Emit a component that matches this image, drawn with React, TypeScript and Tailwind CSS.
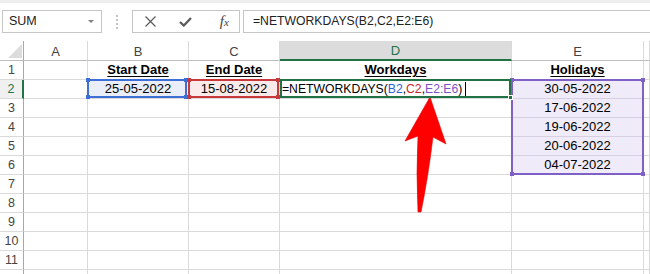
import React from "react";

const GRID = "border-r border-b border-[#dadada]";
const cellFont = { fontFamily: '"Liberation Sans", Arial, sans-serif' };
const uiFont = { fontFamily: '"Liberation Sans", Arial, sans-serif' };

function RowHead({ n, active }: { n: number; active?: boolean }) {
  return (
    <div
      className={
        "flex items-center justify-center border-b border-[#dadada] text-[12.5px] " +
        (active
          ? "border-r-2 border-r-[#217346] text-[#217346] bg-[#f0f0f0]"
          : "border-r border-r-[#a8a8a8] text-[#444]")
      }
      style={uiFont}
    >
      {n < 12 ? n : ""}
    </div>
  );
}

function Handle({ pos, color }: { pos: string; color: string }) {
  return <span className={"absolute w-[4px] h-[4px] " + pos + " " + color} />;
}

function Header({ text }: { text: string }) {
  return (
    <div className={GRID + " flex items-end justify-center pb-[2px]"}>
      <span className="text-[13px] leading-[15px] font-bold underline underline-offset-2 text-black">
        {text}
      </span>
    </div>
  );
}

export default function App() {
  const rows = Array.from({ length: 12 }, (_, i) => i + 1);
  return (
    <div className="w-[650px] h-[274px] overflow-hidden bg-white relative" style={cellFont}>
      <div className="h-[3px] bg-[#eeeeee]" />
      {/* formula bar */}
      <div className="flex h-[23px] mt-[7px]" style={uiFont}>
        <div className="ml-[2px] w-[100px] border border-[#c6c6c6] bg-white flex items-center justify-between pl-[6px] pr-[7px]">
          <span className="text-[12.5px] text-[#222]">SUM</span>
          <span className="w-0 h-0 border-l-[3px] border-r-[3px] border-t-[3px] border-l-transparent border-r-transparent border-t-[#808080]" />
        </div>
        <div className="w-[30px] flex flex-col items-center justify-center gap-[2px]">
          <span className="w-[2px] h-[2px] bg-[#c4c4c4]" />
          <span className="w-[2px] h-[2px] bg-[#c4c4c4]" />
          <span className="w-[2px] h-[2px] bg-[#c4c4c4]" />
          <span className="w-[2px] h-[2px] bg-[#c4c4c4]" />
        </div>
        <div className="w-[108px] border border-[#c6c6c6] bg-white flex items-center">
          <div className="w-[36px] flex justify-center">
            <svg width="11" height="11" viewBox="0 0 11 11">
              <path d="M0.5 0.5 L10.5 10.5 M10.5 0.5 L0.5 10.5" stroke="#5a5a5a" strokeWidth="1.2" fill="none" />
            </svg>
          </div>
          <div className="w-[36px] flex justify-center">
            <svg width="13" height="10" viewBox="0 0 13 10">
              <path d="M1 5 L4.8 8.6 L12 1" stroke="#5a5a5a" strokeWidth="2.2" fill="none" />
            </svg>
          </div>
          <div className="w-[36px] flex justify-center items-center pl-[6px]">
            <span className="italic text-[15px] text-[#444]" style={{ fontFamily: '"Liberation Serif", "Times New Roman", serif' }}>
              f
              <span className="text-[11px]">x</span>
            </span>
          </div>
        </div>
        <div className="ml-[3px] flex-1 border border-r-0 border-[#c6c6c6] bg-white flex items-center pl-[9px]">
          <span className="text-[12.2px] text-[#222]">=NETWORKDAYS(B2,C2,E2:E6)</span>
        </div>
      </div>
      <div className="h-[8px]" />
      {/* sheet */}
      <div
        className="grid grid-cols-[24px_64px_101px_91px_232px_132px_1fr] grid-rows-[20px_repeat(12,19px)]"
        style={uiFont}
      >
        {/* header row */}
        <div className="border-r border-r-[#a8a8a8] border-b border-b-[#bdbdbd] relative">
          <svg className="absolute left-[8px] top-[3px]" width="14" height="14" viewBox="0 0 14 14">
            <path d="M14 0 L14 14 L0 14 Z" fill="#dcdcdc" />
          </svg>
        </div>
        {["A", "B", "C", "D", "E", ""].map((c) => (
          <div
            key={c || "F"}
            className={
              "flex items-center justify-center text-[13px] pt-[2px] border-r border-[#dadada] " +
              (c === "D"
                ? "bg-[#dcdcdc] border-b-2 border-b-[#217346] text-[#217346]"
                : "border-b border-b-[#bdbdbd] text-[#444]")
            }
          >
            {c}
          </div>
        ))}

        {/* purple range E2:E6 */}
        <div className="col-start-6 row-start-3 row-span-5 relative flex flex-col bg-[#efebf8]">
          {["30-05-2022", "17-06-2022", "19-06-2022", "20-06-2022", "04-07-2022"].map((d) => (
            <div
              key={d}
              className="h-[19px] border-r border-b border-[#d6d0e2] flex items-center justify-center text-[13px] text-black"
              style={cellFont}
            >
              {d}
            </div>
          ))}
          <div className="absolute -left-[1px] -top-[1px] right-0 bottom-0 border-2 border-[#7e60c6] z-10">
            <Handle pos="-left-[3px] -top-[3px]" color="bg-[#7e60c6]" />
            <Handle pos="-right-[3px] -top-[3px]" color="bg-[#7e60c6]" />
            <Handle pos="-left-[3px] -bottom-[3px]" color="bg-[#7e60c6]" />
            <Handle pos="-right-[3px] -bottom-[3px]" color="bg-[#7e60c6]" />
          </div>
        </div>

        {rows.map((r) => (
          <React.Fragment key={r}>
            <RowHead n={r} active={r === 2} />
            <div className={GRID} />
            {r === 1 ? (
              <>
                <Header text="Start Date" />
                <Header text="End Date" />
                <Header text="Workdays" />
                <Header text="Holidays" />
              </>
            ) : r === 2 ? (
              <>
                <div className={GRID + " relative bg-[#e9eef9] flex items-center justify-center text-[13px] text-black"} style={cellFont}>
                  25-05-2022
                  <div className="absolute -left-[1px] -top-[1px] right-[1px] bottom-0 border-2 border-[#3d6fd6] z-10">
                    <Handle pos="-left-[3px] -top-[3px]" color="bg-[#3d6fd6]" />
                    <Handle pos="-right-[3px] -top-[3px]" color="bg-[#3d6fd6]" />
                    <Handle pos="-left-[3px] -bottom-[3px]" color="bg-[#3d6fd6]" />
                    <Handle pos="-right-[3px] -bottom-[3px]" color="bg-[#3d6fd6]" />
                  </div>
                </div>
                <div className={GRID + " relative bg-[#fbeaea] flex items-center justify-center text-[13px] text-black"} style={cellFont}>
                  15-08-2022
                  <div className="absolute -left-[1px] -top-[1px] right-0 bottom-0 border-2 border-[#c8383c] z-10">
                    <Handle pos="-left-[3px] -top-[3px]" color="bg-[#c8383c]" />
                    <Handle pos="-right-[3px] -top-[3px]" color="bg-[#c8383c]" />
                    <Handle pos="-left-[3px] -bottom-[3px]" color="bg-[#c8383c]" />
                    <Handle pos="-right-[3px] -bottom-[3px]" color="bg-[#c8383c]" />
                  </div>
                </div>
                <div className={GRID + " relative flex items-center pl-[2px] text-[12.2px] text-black"} style={cellFont}>
                  <span>=NETWORKDAYS(</span>
                  <span className="text-[#2f62d4]">B2</span>
                  <span>,</span>
                  <span className="text-[#c8262b]">C2</span>
                  <span>,</span>
                  <span className="text-[#7b54c4]">E2:E6</span>
                  <span>)</span>
                  <span className="ml-[3px] w-px h-[14px] bg-black" />
                  <div className="absolute left-0 -top-[1px] right-0 bottom-0 border-2 border-[#217346] z-10">
                    <span className="absolute -right-[4px] -bottom-[4px] w-[5px] h-[5px] bg-[#217346] border border-white" />
                  </div>
                </div>
              </>
            ) : (
              <>
                <div className={GRID} />
                <div className={GRID} />
                <div className={GRID} />
                {r > 6 && <div className={GRID} />}
              </>
            )}
            <div className={GRID} />
          </React.Fragment>
        ))}
      </div>

      {/* annotation arrow */}
      <svg className="absolute left-0 top-0 pointer-events-none" width="650" height="274" viewBox="0 0 650 274">
        <path
          d="M430 97 L446 144 L433 137 Q428 178 421 212 L418 212 Q416 172 418 136 L405 141 Z"
          fill="#ff0000"
          stroke="#e60000"
          strokeWidth="0.6"
          strokeLinejoin="round"
        />
      </svg>
    </div>
  );
}
